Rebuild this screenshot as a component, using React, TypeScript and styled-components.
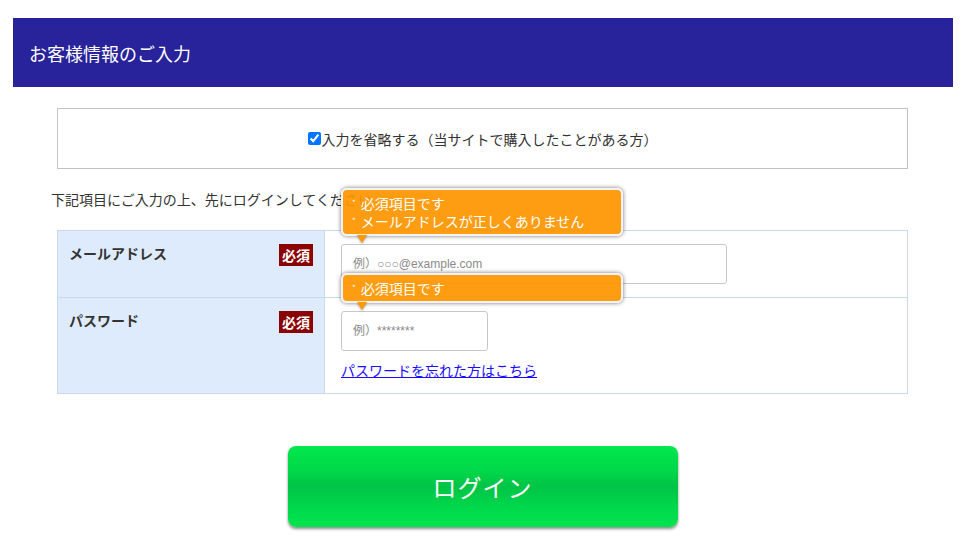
import React from "react";
import styled, { createGlobalStyle } from "styled-components";

const GlobalStyle = createGlobalStyle`
  html, body { margin: 0; padding: 0; background: #fff; }
  body {
    font-family: "Noto Sans CJK JP", "Liberation Sans", sans-serif;
    color: #333;
  }
  * { box-sizing: border-box; }
`;

const Page = styled.div`
  padding: 18px 16px 0 13px;
`;

const Header = styled.h1`
  margin: 0;
  height: 69px;
  background: #28239a;
  color: #fff;
  font-size: 18px;
  font-weight: 400;
  display: flex;
  align-items: center;
  padding-left: 16px;
`;

const Content = styled.div`
  padding: 0 39px 0 38px;
  display: flex;
  flex-direction: column;
`;

const SkipBox = styled.div`
  margin: 21px 6px 0;
  height: 61px;
  border: 1px solid #c2c2c2;
  display: flex;
  align-items: center;
  justify-content: center;
  font-size: 14px;
  color: #333;
`;

const SkipLabel = styled.label`
  display: flex;
  align-items: center;
  cursor: pointer;
`;

const Check = styled.input`
  width: 13px;
  height: 13px;
  margin: 0 1px 0 0;
`;

const Note = styled.p`
  margin: 20px 0 0;
  font-size: 14px;
  line-height: 20px;
  color: #333;
`;

const Table = styled.div`
  margin: 21px 6px 0;
  border: 1px solid #c9d9ef;
  display: grid;
  grid-template-columns: 267px 1fr;
`;

const LabelCell = styled.div<{ $h: number; $last?: boolean }>`
  height: ${(p) => p.$h}px;
  background: #deebfd;
  border-right: 1px solid #c9d9ef;
  border-bottom: ${(p) => (p.$last ? "none" : "1px solid #c9d9ef")};
  padding: 13px 11px 0 11px;
  display: flex;
  justify-content: space-between;
  align-items: flex-start;
`;

const LabelText = styled.span`
  font-size: 14px;
  font-weight: 700;
  line-height: 18px;
  color: #333;
`;

const Badge = styled.span`
  background: #8b0000;
  color: #fff;
  font-size: 14px;
  font-weight: 700;
  line-height: 22px;
  height: 22px;
  padding: 0 3px;
`;

const ValueCell = styled.div<{ $last?: boolean }>`
  border-bottom: ${(p) => (p.$last ? "none" : "1px solid #c9d9ef")};
  padding: 13px 16px;
  display: flex;
  flex-direction: column;
  align-items: flex-start;
`;

const InputWrap = styled.div`
  position: relative;
`;

const TextInput = styled.input<{ $w: number }>`
  display: block;
  width: ${(p) => p.$w}px;
  height: 40px;
  border: 1px solid #c8c8c8;
  border-radius: 3px;
  padding: 0 11px;
  font-family: "Liberation Sans", "Noto Sans CJK JP", sans-serif;
  font-size: 12px;
  color: #333;
  outline: none;
  &::placeholder { color: #8a8a8a; }
`;

const Tooltip = styled.div`
  position: absolute;
  left: 0;
  bottom: calc(100% + 8px);
  width: 282px;
  background: rgba(255, 150, 0, 0.93);
  border: 2px solid #f3f3f3;
  border-radius: 6px;
  box-shadow: 0 0 4px rgba(0, 0, 0, 0.55);
  color: #fff;
  font-size: 14px;
  line-height: 17px;
  padding: 4px 10px 4px 9px;
  z-index: 2;
  &::after {
    content: "";
    position: absolute;
    left: 14px;
    bottom: -9px;
    border-left: 5px solid transparent;
    border-right: 5px solid transparent;
    border-top: 8px solid #ff9900;
    filter: drop-shadow(0 1px 1px rgba(0, 0, 0, 0.35));
  }
`;

const Star = styled.span`
  font-size: 8px;
  vertical-align: 3px;
  margin-right: 5px;
`;

const TipLine = styled.div``;

const Link = styled.a`
  margin-top: 10px;
  font-size: 14px;
  line-height: 18px;
  color: #1a0dff;
  text-decoration: underline;
`;

const ButtonRow = styled.div`
  display: flex;
  justify-content: center;
  margin-top: 52px;
  padding-bottom: 20px;
`;

const LoginButton = styled.button`
  width: 390px;
  height: 81px;
  border: none;
  border-radius: 8px;
  background: linear-gradient(
    to bottom,
    #00e84d 0%,
    #00d849 30%,
    #00c446 50%,
    #00d84b 75%,
    #00e44f 100%
  );
  box-shadow: 0 2px 3px rgba(0, 0, 0, 0.45);
  color: #fff;
  font-family: "Noto Sans CJK JP", sans-serif;
  font-size: 24px;
  letter-spacing: 1px;
  cursor: pointer;
`;

export default function App() {
  return (
    <>
      <GlobalStyle />
      <Page>
        <Header>お客様情報のご入力</Header>
        <Content>
          <SkipBox>
            <SkipLabel>
              <Check type="checkbox" defaultChecked />
              入力を省略する（当サイトで購入したことがある方）
            </SkipLabel>
          </SkipBox>
          <Note>下記項目にご入力の上、先にログインしてください</Note>
          <Table>
            <LabelCell $h={67}>
              <LabelText>メールアドレス</LabelText>
              <Badge>必須</Badge>
            </LabelCell>
            <ValueCell>
              <InputWrap>
                <Tooltip>
                  <TipLine>
                    <Star>*</Star>必須項目です
                  </TipLine>
                  <TipLine>
                    <Star>*</Star>メールアドレスが正しくありません
                  </TipLine>
                </Tooltip>
                <TextInput $w={386} placeholder="例）○○○@example.com" />
              </InputWrap>
            </ValueCell>
            <LabelCell $h={95} $last>
              <LabelText>パスワード</LabelText>
              <Badge>必須</Badge>
            </LabelCell>
            <ValueCell $last>
              <InputWrap>
                <Tooltip>
                  <TipLine>
                    <Star>*</Star>必須項目です
                  </TipLine>
                </Tooltip>
                <TextInput $w={147} type="password" placeholder="例）********" />
              </InputWrap>
              <Link href="#">パスワードを忘れた方はこちら</Link>
            </ValueCell>
          </Table>
          <ButtonRow>
            <LoginButton type="button">ログイン</LoginButton>
          </ButtonRow>
        </Content>
      </Page>
    </>
  );
}
